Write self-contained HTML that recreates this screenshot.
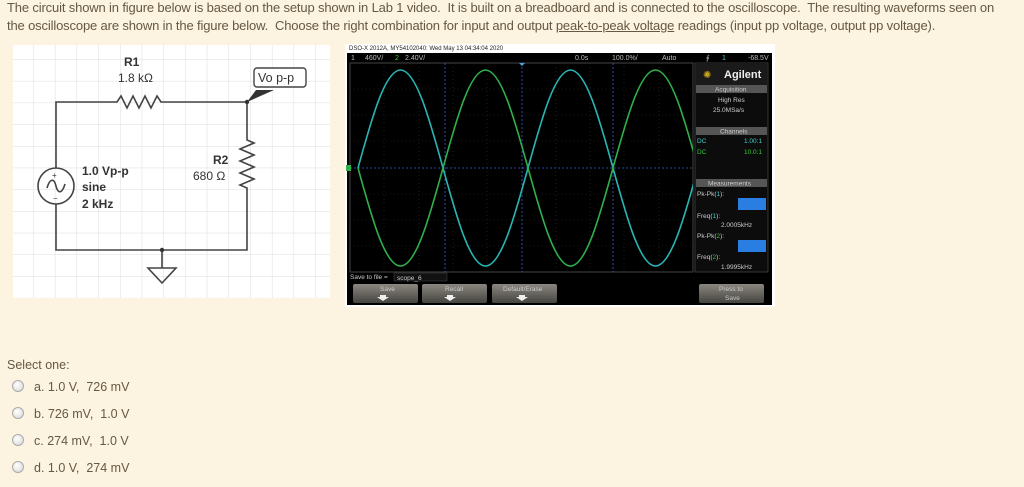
<!DOCTYPE html>
<html><head><meta charset="utf-8"><style>
html,body{margin:0;padding:0;background:#fcf3e1;width:1024px;height:487px;overflow:hidden}
body{font-family:"Liberation Sans",sans-serif;color:#665841;position:relative}
.t{position:absolute;left:7px;font-size:13px;white-space:nowrap;letter-spacing:-0.15px}
.opt{position:absolute;left:12px;font-size:12.5px;white-space:nowrap}
.r{display:inline-block;width:10px;height:10px;border-radius:50%;border:1px solid #aaa;background:radial-gradient(circle at 40% 35%,#fff,#d6d6d6);vertical-align:-1px;margin-right:10px}
svg{position:absolute;left:0;top:0}
</style></head><body>
<div class="t" style="top:0px">The circuit shown in figure below is based on the setup shown in Lab 1 video.&nbsp; It is built on a breadboard and is connected to the oscilloscope.&nbsp; The resulting waveforms seen on</div>
<div class="t" style="top:18px">the oscilloscope are shown in the figure below.&nbsp; Choose the right combination for input and output <u>peak-to-peak voltage</u> readings (input pp voltage, output pp voltage).</div>
<div class="t" style="top:358px;font-size:12.5px;letter-spacing:0">Select one:</div>
<div class="opt" style="top:380px"><span class="r"></span>a. 1.0 V,&nbsp; 726 mV</div>
<div class="opt" style="top:407px"><span class="r"></span>b. 726 mV,&nbsp; 1.0 V</div>
<div class="opt" style="top:434px"><span class="r"></span>c. 274 mV,&nbsp; 1.0 V</div>
<div class="opt" style="top:461px"><span class="r"></span>d. 1.0 V,&nbsp; 274 mV</div>

<svg width="1024" height="487" viewBox="0 0 1024 487">
<defs>
<pattern id="g" x="11.5" y="37.5" width="21.7" height="21.7" patternUnits="userSpaceOnUse">
<path d="M0 0H21.7M0 0V21.7" stroke="#dcdcdc" stroke-width="1" fill="none"/></pattern>
<clipPath id="scr"><rect x="350" y="63" width="343" height="209"/></clipPath>
<linearGradient id="btn" x1="0" y1="0" x2="0" y2="1"><stop offset="0" stop-color="#8a8780"/><stop offset="1" stop-color="#46443f"/></linearGradient>
</defs>
<!-- circuit -->
<rect x="13" y="45" width="317" height="253" fill="#fff"/>
<rect x="13" y="45" width="317" height="253" fill="url(#g)"/>
<g stroke="#444" stroke-width="1.6" fill="none">
<path d="M56 168V102H117l4-6 6 12 6-12 6 12 6-12 6 12 6-12 4 6H247V140l7 3-14 6 14 6-14 6 14 6-14 6 14 6-14 6 7 3V250H56V204"/>
<circle cx="56" cy="186" r="18"/>
<path d="M47 188c3-10 7-10 9-2s6 8 9-2"/>
<path d="M162 250v18M148 268h28l-14 15z"/>
</g>
<path d="M247 102l9-12h18z" fill="#333"/>
<circle cx="247" cy="102" r="2.2" fill="#333"/><circle cx="162" cy="250" r="2.2" fill="#333"/>
<rect x="254" y="68" width="52" height="19" rx="3" fill="#fff" stroke="#444" stroke-width="1.4"/>
<g font-family="Liberation Sans,sans-serif" font-size="12" fill="#333" font-weight="bold">
<text x="258" y="82" font-weight="normal" font-size="12.5">Vo p-p</text>
<text x="124" y="66">R1</text><text x="118" y="82" font-weight="normal">1.8 kΩ</text>
<text x="213" y="164">R2</text><text x="193" y="180" font-weight="normal">680 Ω</text>
<text x="82" y="175">1.0 Vp-p</text><text x="82" y="191">sine</text><text x="82" y="208">2 kHz</text>
<text x="52" y="178" font-size="8" font-weight="normal">+</text><text x="53" y="201" font-size="8" font-weight="normal">−</text>
</g>
<!-- scope -->
<rect x="345" y="44" width="430" height="263" fill="#fff"/>
<text x="349" y="50" font-family="Liberation Sans,sans-serif" font-size="6" fill="#222">DSO-X 2012A, MY54102040: Wed May 13 04:34:04 2020</text>
<rect x="347" y="53" width="425" height="252" fill="#000"/>
<g font-family="Liberation Sans,sans-serif" font-size="7" fill="#bbb">
<text x="351" y="60">1</text><text x="365" y="60">460V/</text><text x="395" y="60" fill="#3c3">2</text><text x="405" y="60">2.40V/</text>
<text x="575" y="60">0.0s</text><text x="612" y="60">100.0%/</text><text x="662" y="60">Auto</text>
<text x="706" y="60">∮</text><text x="722" y="60" fill="#4cc">1</text><text x="748" y="60">-68.5V</text>
</g>
<rect x="350" y="63" width="343" height="209" fill="#000" stroke="#555" stroke-width="0.8"/>
<g stroke="#333" stroke-width="0.6" stroke-dasharray="1,3">
<path d="M384 63V272M419 63V272M453 63V272M487 63V272M556 63V272M590 63V272M624 63V272M659 63V272M350 89H693M350 115H693M350 141H693M350 194H693M350 220H693M350 246H693"/>
</g>
<g stroke="#3a5fd0" stroke-width="0.8" stroke-dasharray="2,2">
<path d="M445 63V272M522 63V272M613 63V272M350 168H693"/>
</g>
<path d="M519 63h6l-3 3z" fill="#4aa6e6"/>
<g clip-path="url(#scr)" fill="none" stroke-width="1.6">
<path stroke="#2ab5b5" d="M358 168C371.86 117.8 385.12 70 400.5 70S429.14 117.8 443 168S470.12 266 485.5 266S514.14 218.2 528 168S555.12 70 570.5 70S599.14 117.8 613 168S640.12 266 655.5 266S684.14 218.2 698 168"/>
<path stroke="#2fb04a" d="M358 168C371.86 218.2 385.12 266 400.5 266S429.14 218.2 443 168S470.12 70 485.5 70S514.14 117.8 528 168S555.12 266 570.5 266S599.14 218.2 613 168S640.12 70 655.5 70S684.14 117.8 698 168"/>
</g>
<rect x="346" y="165" width="5" height="6" fill="#2fb04a"/>
<!-- right panel -->
<rect x="695" y="63" width="73" height="209" fill="#0c0c0c" stroke="#444" stroke-width="0.8"/>
<rect x="696" y="63" width="71" height="22" fill="#1a1a1a"/>
<text x="703" y="78" font-family="Liberation Sans,sans-serif" font-size="10" fill="#c9a81a">✺</text>
<text x="724" y="78" font-family="Liberation Sans,sans-serif" font-size="11" font-weight="bold" fill="#eee">Agilent</text>
<g font-family="Liberation Sans,sans-serif" font-size="6.5" fill="#ccc">
<rect x="696" y="85" width="71" height="8" fill="#555"/><text x="715" y="91.5">Acquisition</text>
<text x="718" y="102">High Res</text><text x="713" y="112">25.0MSa/s</text>
<rect x="696" y="127" width="71" height="8" fill="#555"/><text x="720" y="133.5">Channels</text>
<text x="697" y="143" fill="#4cc">DC</text><text x="744" y="143" fill="#4cc">1.00:1</text>
<text x="697" y="154" fill="#3c3">DC</text><text x="744" y="154" fill="#3c3">10.0:1</text>
<rect x="696" y="179" width="71" height="8" fill="#555"/><text x="708" y="185.5">Measurements</text>
<text x="697" y="196">Pk-Pk(<tspan fill="#4cc">1</tspan>):</text>
<rect x="738" y="198" width="28" height="12" fill="#2a7de1"/>
<text x="697" y="218">Freq(<tspan fill="#4cc">1</tspan>):</text><text x="721" y="227">2.0005kHz</text>
<text x="697" y="238">Pk-Pk(<tspan fill="#3c3">2</tspan>):</text>
<rect x="738" y="240" width="28" height="12" fill="#2a7de1"/>
<text x="697" y="259">Freq(<tspan fill="#3c3">2</tspan>):</text><text x="721" y="269">1.9995kHz</text>
</g>
<!-- bottom -->
<g font-family="Liberation Sans,sans-serif" font-size="6.5" fill="#ccc">
<text x="350" y="279">Save to file =</text>
<rect x="394" y="273" width="53" height="8" fill="#111" stroke="#444" stroke-width="0.5"/>
<text x="397" y="280">scope_6</text>
<rect x="353" y="284" width="65" height="19" rx="2" fill="url(#btn)"/><text x="380" y="291">Save</text><path d="M380 295h6v2h3l-6 4-6-4h3z" fill="#eee"/>
<rect x="422" y="284" width="65" height="19" rx="2" fill="url(#btn)"/><text x="445" y="291">Recall</text><path d="M447 295h6v2h3l-6 4-6-4h3z" fill="#eee"/>
<rect x="492" y="284" width="65" height="19" rx="2" fill="url(#btn)"/><text x="503" y="291">Default/Erase</text><path d="M519 295h6v2h3l-6 4-6-4h3z" fill="#eee"/>
<rect x="699" y="284" width="65" height="19" rx="2" fill="url(#btn)"/><text x="719" y="291">Press to</text><text x="725" y="300">Save</text>
</g>
</svg>
</body></html>
